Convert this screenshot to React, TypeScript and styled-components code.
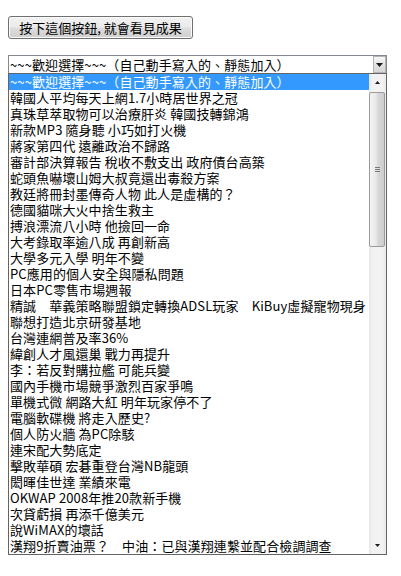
import React from "react"
import styled, { createGlobalStyle } from "styled-components"

const GlobalStyle = createGlobalStyle`
  body {
    margin: 0;
    background: #ffffff;
    font-family: "Noto Sans CJK TC", "Liberation Sans", sans-serif;
    color: #000000;
  }
`

const Page = styled.div`
  padding: 16px 8px 0;
`

const ResultButton = styled.button`
  display: block;
  width: 185px;
  height: 23px;
  padding: 0;
  border: 1px solid #707070;
  border-radius: 3px;
  background: linear-gradient(#f2f2f2 0%, #ebebeb 48%, #dddddd 52%, #cfcfcf 100%);
  box-shadow: inset 0 0 0 1px #fbfbfb;
  font-family: inherit;
  font-size: 13px;
  line-height: 19px;
  color: #000000;
`

const SelectWrap = styled.div`
  display: flex;
  flex-direction: column;
  width: 379px;
  margin-top: 16px;
`

const SelectBox = styled.div`
  display: flex;
  align-items: stretch;
  box-sizing: border-box;
  height: 19px;
  border: 1px solid #828790;
  background: #ffffff;
`

const SelectText = styled.div`
  flex: 1;
  padding-left: 1px;
  font-size: 13px;
  line-height: 17px;
  letter-spacing: 0.1px;
  white-space: nowrap;
`

const ArrowButton = styled.div`
  display: flex;
  align-items: center;
  justify-content: center;
  width: 13px;
  box-sizing: border-box;
  border: 1px solid #b4b4b4;
  background: linear-gradient(#f6f6f6, #e4e4e4 50%, #d6d6d6);
`

const Dropdown = styled.div`
  display: flex;
  margin-top: -1px;
  box-sizing: border-box;
  border: 1px solid #646464;
  background: #ffffff;
`

const List = styled.div`
  display: flex;
  flex-direction: column;
  flex: 1;
  min-width: 0;
`

const Option = styled.div<{ $selected?: boolean }>`
  height: 16px;
  padding-left: 1px;
  font-size: 13px;
  line-height: 16px;
  letter-spacing: 0.1px;
  white-space: nowrap;
  background: ${(p) => (p.$selected ? "#3399ff" : "transparent")};
  color: ${(p) => (p.$selected ? "#ffffff" : "#000000")};
`

const ScrollBar = styled.div`
  display: flex;
  flex-direction: column;
  width: 17px;
  background: linear-gradient(to right, #e6e6e6, #f2f2f2 20%, #f2f2f2 80%, #e9e9e9);
`

const ScrollArrow = styled.div`
  display: flex;
  align-items: center;
  justify-content: center;
  height: 17px;
`

const Thumb = styled.div`
  display: flex;
  flex-direction: column;
  align-items: center;
  justify-content: center;
  gap: 1px;
  height: 155px;
  margin: 1px 1px 0 0;
  box-sizing: border-box;
  border: 1px solid #9a9a9a;
  border-radius: 2px;
  background: linear-gradient(to right, #f4f4f4, #e8e8e8 45%, #d9d9d9 55%, #cdcdcd);
`

const Grip = styled.span`
  display: block;
  width: 5px;
  height: 1px;
  background: #7a7a7a;
`

const Track = styled.div`
  flex: 1;
`

const items = [
  "~~~歡迎選擇~~~（自己動手寫入的、靜態加入）",
  "韓國人平均每天上網1.7小時居世界之冠",
  "真珠草萃取物可以治療肝炎 韓國技轉錦鴻",
  "新款MP3 隨身聽 小巧如打火機",
  "蔣家第四代 遠離政治不歸路",
  "審計部決算報告 稅收不敷支出 政府債台高築",
  "蛇頭魚嚇壞山姆大叔竟還出毒殺方案",
  "教廷將冊封墨傳奇人物 此人是虛構的？",
  "德國貓咪大火中捨生救主",
  "搏浪漂流八小時 他撿回一命",
  "大考錄取率逾八成 再創新高",
  "大學多元入學 明年不變",
  "PC應用的個人安全與隱私問題",
  "日本PC零售市場週報",
  "精誠　華義策略聯盟鎖定轉換ADSL玩家　KiBuy虛擬寵物現身",
  "聯想打造北京研發基地",
  "台灣連網普及率36%",
  "緯創人才風還巢 戰力再提升",
  "李：若反對購拉艦 可能兵變",
  "國內手機市場競爭激烈百家爭鳴",
  "單機式微 網路大紅 明年玩家停不了",
  "電腦軟碟機 將走入歷史?",
  "個人防火牆 為PC除駭",
  "連宋配大勢底定",
  "擊敗華碩 宏碁重登台灣NB龍頭",
  "閎暉佳世達 業績來電",
  "OKWAP 2008年推20款新手機",
  "次貸虧損 再添千億美元",
  "說WiMAX的壞話",
  "漢翔9折賣油票？　中油：已與漢翔連繫並配合檢調調查",
]

const Triangle: React.FC<{ up?: boolean; w?: number }> = ({ up, w = 7 }) => {
  const h = Math.ceil(w / 2)
  const points = up ? `0,${h} ${w},${h} ${w / 2},0` : `0,0 ${w},0 ${w / 2},${h}`
  return (
    <svg width={w} height={h} viewBox={`0 0 ${w} ${h}`}>
      <polygon points={points} fill="#1a1a1a" />
    </svg>
  )
}

const App: React.FC = () => {
  return (
    <Page>
      <GlobalStyle />
      <ResultButton type="button">按下這個按鈕, 就會看見成果</ResultButton>

      <SelectWrap>
        <SelectBox>
          <SelectText>{items[0]}</SelectText>
          <ArrowButton>
            <Triangle w={7} />
          </ArrowButton>
        </SelectBox>

        <Dropdown>
          <List>
            {items.map((item, i) => (
              <Option key={i} $selected={i === 0}>
                {item}
              </Option>
            ))}
          </List>
          <ScrollBar>
            <ScrollArrow>
              <Triangle up w={5} />
            </ScrollArrow>
            <Thumb>
              <Grip />
              <Grip />
              <Grip />
            </Thumb>
            <Track />
            <ScrollArrow>
              <Triangle w={5} />
            </ScrollArrow>
          </ScrollBar>
        </Dropdown>
      </SelectWrap>
    </Page>
  )
}

export default App
